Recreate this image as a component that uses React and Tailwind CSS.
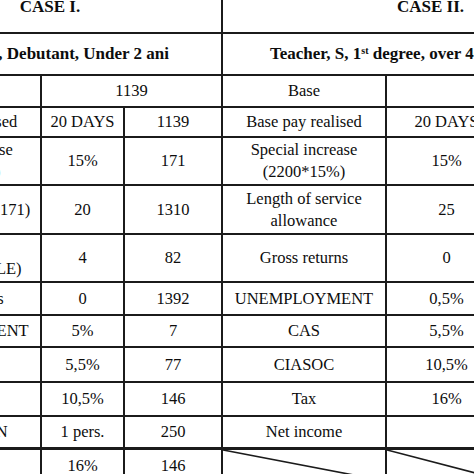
import React from "react";

const B = "border-r-2 border-b-2 border-[#1b1b1b]";

function Cell({ children, className = "" }) {
  return (
    <div className={`flex items-center justify-center text-center ${B} ${className}`}>
      {children}
    </div>
  );
}

function Diag() {
  return (
    <div className={`relative ${B}`}>
      <svg className="absolute inset-0 w-full h-full" preserveAspectRatio="none" viewBox="0 0 100 100">
        <line x1="0" y1="0" x2="100" y2="100" stroke="#1b1b1b" strokeWidth="1.6" vectorEffect="non-scaling-stroke" />
      </svg>
    </div>
  );
}

function Lines({ v }) {
  if (Array.isArray(v)) {
    return (
      <span>
        {v[0]}
        <br />
        {v[1]}
      </span>
    );
  }
  return <span className="whitespace-nowrap">{v}</span>;
}

const body = [
  ["Base pay realised", "20 DAYS", "1139", "Base pay realised", "20 DAYS", "2200", ""],
  [["Special increase", "(1139*15%)"], "15%", "171", ["Special increase", "(2200*15%)"], "15%", "330", ""],
  ["Base pay (1139+171)", "20", "1310", ["Length of service", "allowance"], "25", "632", ""],
  [["Returns", "(NOT TAXABLE)"], "4", "82", "Gross returns", "0", "3162", ""],
  ["Gross returns", "0", "1392", "UNEMPLOYMENT", "0,5%", "16", ""],
  ["UNEMPLOYMENT", "5%", "7", "CAS", "5,5%", "174", ""],
  ["CAS", "5,5%", "77", "CIASOC", "10,5%", "332", ""],
  ["CIASOC", "10,5%", "146", "Tax", "16%", "422", ""],
  ["DEDUCTION", "1 pers.", "250", "Net income", "", "2218", "thick"],
];

export default function App() {
  return (
    <div className="w-[474px] h-[474px] overflow-hidden bg-white text-[#0d0d0d] relative font-['Liberation_Serif','Times_New_Roman',serif]">
      <div className="grid w-max -ml-[121px] -mt-[19px] grid-cols-[163px_83px_98px_164px_121px_132px] grid-rows-[53px_42px_32px_30px_48px_49px_48px_33px_32px_35px_34px_33px_33px] text-[16.5px] leading-[22px]">
        <Cell className="col-span-3 font-bold text-[17px]">CASE I.</Cell>
        <Cell className="col-span-3 font-bold text-[17px] justify-start pl-[174px]">CASE II.</Cell>

        <Cell className="col-span-3 font-bold text-[17px] pr-[7px]">
          <span className="whitespace-nowrap">Teacher, S, Debutant, Under 2 ani</span>
        </Cell>
        <Cell className="col-span-3 font-bold text-[17px] justify-start pl-[47px]">
          <span className="whitespace-nowrap">
            Teacher, S, 1<sup className="text-[10px]">st</sup> degree, over 40 ani
          </span>
        </Cell>

        <Cell>Base</Cell>
        <Cell className="col-span-2">1139</Cell>
        <Cell>Base</Cell>
        <Cell className="col-span-2">2200</Cell>

        {body.map((r, i) => {
          const extra = r[6] === "thick" ? "border-b-[3px]" : "";
          return (
            <React.Fragment key={i}>
              {r.slice(0, 6).map((v, j) => (
                <Cell key={j} className={extra}>
                  <Lines v={v} />
                </Cell>
              ))}
            </React.Fragment>
          );
        })}

        <Cell>Tax</Cell>
        <Cell>16%</Cell>
        <Cell>146</Cell>
        <Diag />
        <Diag />
        <Diag />
      </div>
    </div>
  );
}
